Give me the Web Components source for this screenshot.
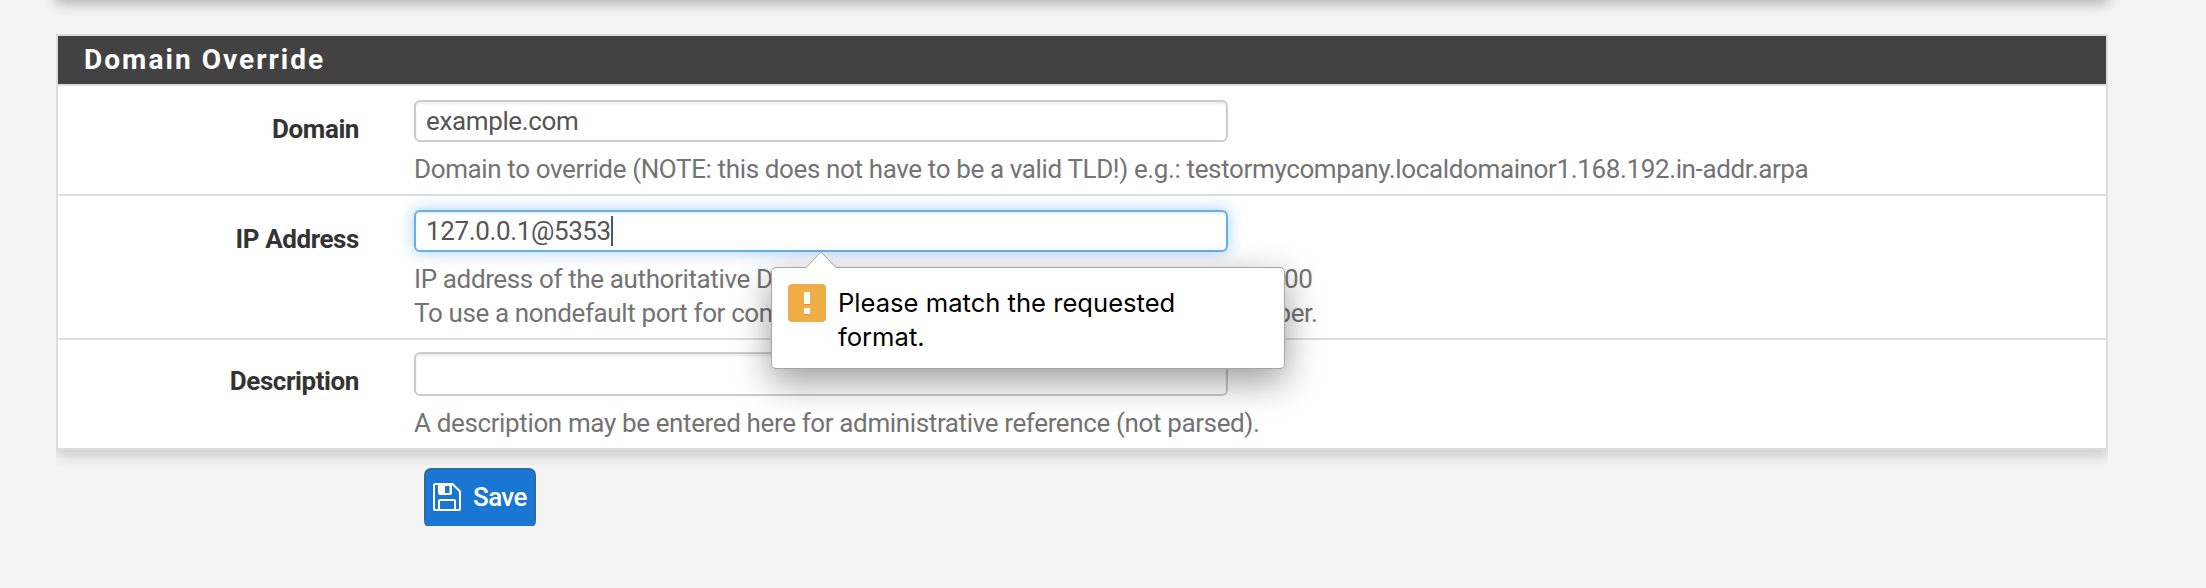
<!DOCTYPE html>
<html lang="en">
<head>
<meta charset="utf-8">
<title>Domain Override</title>
<style>
    body {
        margin: 0;
        height: 588px;
        overflow: hidden;
        background: #f4f4f4;
        font-family: Roboto, sans-serif;
        font-size: 26px;
        line-height: 34px;
        letter-spacing: -.37px;
        color: #212121;
    }
</style>
</head>
<body>
<override-page></override-page>

<script>
class FormPanel extends HTMLElement {

    constructor() {
        super();
        this.attachShadow({mode: "open"});
    }

    connectedCallback() {
        this.shadowRoot.innerHTML = `
        <style>
            :host {
                display: block;
                box-sizing: border-box;
                background: #fff;
                border: 2px solid #ddd;
                box-shadow: 0 6px 12px rgba(0, 0, 0, .17);
                clip-path: inset(0 0 -30px 0);
            }
            h2 {
                margin: 0;
                height: 48px;
                padding-left: 26px;
                border-bottom: 2px solid #ddd;
                background: #424242;
                color: #fff;
                font-size: 28px;
                font-weight: 700;
                line-height: 48px;
                letter-spacing: 2.05px;
            }
        </style>
        <h2>${this.getAttribute("heading")}</h2>
        <slot></slot>
        `;
    }
}

class FormRow extends HTMLElement {

    constructor() {
        super();
        this.attachShadow({mode: "open"});
    }

    connectedCallback() {
        this.shadowRoot.innerHTML = `
        <style>
            :host {
                display: grid;
                grid-template-columns: 301px 814px;
                column-gap: 55px;
                box-sizing: border-box;
                height: 110px;
                padding-top: 14px;
                border-bottom: 2px solid #ddd;
            }
            :host([tall]) {
                height: 144px;
            }
            :host([last]) {
                height: 108px;
                padding-top: 12px;
                border-bottom: 0;
            }
            label {
                padding-top: 12px;
                text-align: right;
                font-weight: 700;
                letter-spacing: -.42px;
                color: #333;
            }
            .help {
                padding-top: 10px;
                color: #737373;
                white-space: nowrap;
            }
        </style>
        <label>${this.getAttribute("label")}</label>
        <div>
            <slot name="field"></slot>
            <div class="help"><slot></slot></div>
        </div>
        `;
    }
}

class TextField extends HTMLElement {

    constructor() {
        super();
        this.attachShadow({mode: "open"});
    }

    connectedCallback() {
        this.shadowRoot.innerHTML = `
        <style>
            :host {
                display: flex;
                align-items: center;
                position: relative;
                box-sizing: border-box;
                height: 42px;
                padding: 0 10px;
                border: 2px solid #ccc;
                border-radius: 6px;
                background: #fff;
                box-shadow: inset 0 2px 2px rgba(0, 0, 0, .075);
                color: #555;
            }
            :host([size="lg"]) {
                height: 44px;
            }
            :host([focused]) {
                border-color: #66afe9;
                box-shadow: inset 0 2px 2px rgba(0, 0, 0, .075), 0 0 16px rgba(102, 175, 233, .6);
            }
            .caret {
                display: none;
                width: 2px;
                height: 30px;
                background: #555;
            }
            :host([focused]) .caret {
                display: block;
            }
        </style>
        <span>${this.getAttribute("value") || ""}</span>
        <i class="caret"></i>
        <slot></slot>
        `;
    }
}

class ValidationBubble extends HTMLElement {

    constructor() {
        super();
        this.attachShadow({mode: "open"});
    }

    connectedCallback() {
        this.shadowRoot.innerHTML = `
        <style>
            /* hangs under the field it belongs to */
            :host {
                display: flex;
                position: absolute;
                top: 55px;
                left: 355px;
                z-index: 10;
                box-sizing: border-box;
                width: 514px;
                height: 102px;
                padding: 16px;
                gap: 13px;
                border: 1px solid #a6a6a6;
                border-radius: 5px;
                background: #fff;
                box-shadow: 0 12px 36px rgba(0, 0, 0, .4);
                color: #000;
                font-family: Inter, sans-serif;
                font-size: 25.6px;
                line-height: 34px;
                letter-spacing: 0;
            }
            .arrow {
                position: absolute;
                top: -17px;
                left: 33px;
            }
            .icon {
                flex: none;
            }
            p {
                margin: 2px 0 0 -1px;
                width: 360px;
            }
        </style>
        <svg class="arrow" width="32" height="18" viewBox="0 0 32 18">
            <path d="M0 18 L1 17 L16 1 L31 17 L32 18 Z" fill="#fff"/>
            <path d="M1 16.5 L16 1 L31 16.5" fill="none" stroke="#a6a6a6"/>
        </svg>
        <svg class="icon" width="38" height="38" viewBox="0 0 38 38">
            <rect width="38" height="38" rx="4" fill="#efad47"/>
            <path d="M16 20h6v1h-6zM16 30h6v1h-6z" fill="#e8893a"/>
            <path d="M16 8h6v12h-6zM16 24h6v6h-6z" fill="#fff"/>
        </svg>
        <p><slot></slot></p>
        `;
    }
}

class SaveButton extends HTMLElement {

    constructor() {
        super();
        this.attachShadow({mode: "open"});
    }

    connectedCallback() {
        this.shadowRoot.innerHTML = `
        <style>
            :host {
                display: block;
                width: 112px;
                height: 58px;
                overflow: hidden;
            }
            button {
                display: flex;
                align-items: center;
                gap: 12px;
                box-sizing: border-box;
                width: 112px;
                height: 60px;
                padding: 0 0 2px 7px;
                border: 2px solid #286ba8;
                border-radius: 7px;
                background: #1976d2;
                color: #fff;
                font: 500 26px Roboto, sans-serif;
                letter-spacing: -.6px;
            }
        </style>
        <button type="button">
            <svg width="28" height="28" viewBox="0 0 28 28" fill="none" stroke="#fff" stroke-width="2">
                <path d="M2 1 H19.5 L27 8.5 V26 Q27 27 26 27 H2 Q1 27 1 26 V2 Q1 1 2 1 Z"/>
                <path d="M6 27 V18 Q6 17 7 17 H21 Q22 17 22 18 V27"/>
                <path fill="#fff" fill-rule="evenodd" stroke="none" d="M5 1 H19 V10 Q19 12 17 12 H7 Q5 12 5 10 Z M12 3 V10 H16.5 V3 Z"/>
            </svg>
            <slot></slot>
        </button>
        `;
    }
}

class OverridePage extends HTMLElement {

    constructor() {
        super();
        this.attachShadow({mode: "open"});
    }

    connectedCallback() {
        this.shadowRoot.innerHTML = `
        <style>
            :host {
                display: block;
                padding: 0 98px 0 56px;
            }
            /* lower edge of the panel scrolled off the top */
            .previous {
                display: flow-root;
                height: 34px;
            }
            .previous::before {
                content: "";
                display: block;
                height: 40px;
                margin-top: -40px;
                box-shadow: 0 3px 14px rgba(0, 0, 0, .3);
            }
            save-button {
                margin: 18px 0 0 368px;
            }
        </style>
        <div class="previous"></div>
        <form-panel heading="Domain Override">
            <form-row label="Domain">
                <text-field slot="field" value="example.com"></text-field>
                Domain to override (NOTE: this does not have to be a valid TLD!) e.g.: testormycompany.localdomainor1.168.192.in-addr.arpa
            </form-row>
            <form-row label="IP Address" tall>
                <text-field slot="field" value="127.0.0.1@5353" focused>
                    <validation-bubble>Please match the requested format.</validation-bubble>
                </text-field>
                IP address of the authoritative DNS server for this domain. e.g.: 192.168.100.100<br>
                To use a nondefault port for communication, append an '@' with the port number.
            </form-row>
            <form-row label="Description" last>
                <text-field slot="field" size="lg"></text-field>
                A description may be entered here for administrative reference (not parsed).
            </form-row>
        </form-panel>
        <save-button>Save</save-button>
        `;
    }
}

customElements.define("form-panel", FormPanel);
customElements.define("form-row", FormRow);
customElements.define("text-field", TextField);
customElements.define("validation-bubble", ValidationBubble);
customElements.define("save-button", SaveButton);
customElements.define("override-page", OverridePage);
</script>
</body>
</html>
